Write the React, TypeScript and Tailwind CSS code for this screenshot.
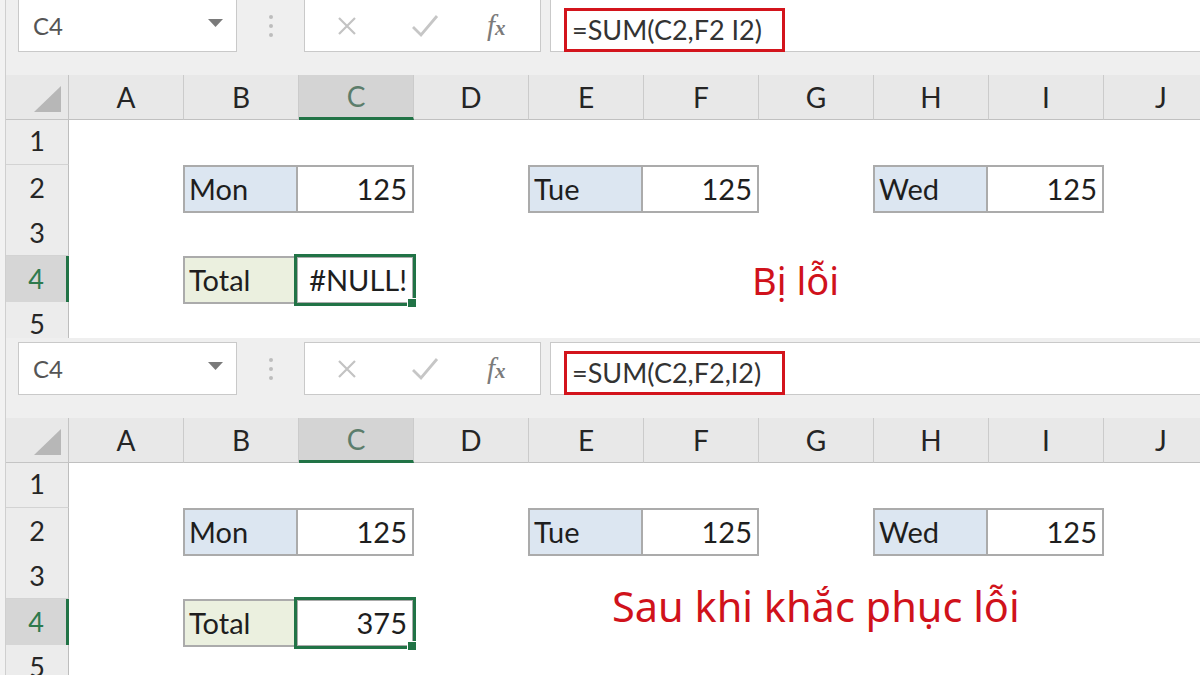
import React from "react";
import clsx from "clsx";

const COLS = ["A", "B", "C", "D", "E", "F", "G", "H", "I", "J"];
const ROW_H = ["h-[46px]", "h-[46px]", "h-[45px]", "h-[46px]", "h-[46px]"];
const GRID = "grid grid-cols-[63px_repeat(10,115px)]";

const FormulaBar = ({ formula }: { formula: string }) => (
  <div className="h-[80px] shrink-0 flex items-start pt-[4px] bg-[#efefef]">
    {/* name box */}
    <div className="ml-[12px] w-[219px] h-[53px] bg-white border border-[#c9c9c9] flex items-center justify-between pl-[14px] pr-[13px]">
      <span className="text-[24px] text-[#555]">C4</span>
      <svg width="15" height="8" viewBox="0 0 15 8" className="-mt-[6px]">
        <path d="M0 0 H15 L7.5 8 Z" fill="#7a7a7a" />
      </svg>
    </div>

    <div className="w-[67px] h-[53px] flex flex-col items-center justify-center gap-[5px]">
      <span className="w-[4px] h-[4px] rounded-full bg-[#bdbdbd]" />
      <span className="w-[4px] h-[4px] rounded-full bg-[#bdbdbd]" />
      <span className="w-[4px] h-[4px] rounded-full bg-[#bdbdbd]" />
    </div>

    {/* cancel / enter / fx */}
    <div className="w-[237px] h-[53px] bg-white border border-[#c9c9c9] flex items-center">
      <svg width="20" height="20" viewBox="0 0 20 20" className="ml-[32px]">
        <path d="M2 2 L18 18 M18 2 L2 18" stroke="#c3c3c3" strokeWidth="2.2" />
      </svg>
      <svg width="28" height="24" viewBox="0 0 28 24" className="ml-[54px]">
        <path d="M2 13 L10 21 L26 2" stroke="#c6c6c6" strokeWidth="2.8" fill="none" />
      </svg>
      <span className="ml-[48px] font-['Liberation_Serif',serif] italic text-[29px] text-[#7b7b7b] leading-none">
        f<span className="text-[21px] font-bold">x</span>
      </span>
    </div>

    {/* formula input */}
    <div className="relative ml-[9px] mr-[2px] flex-1 h-[53px] bg-white border border-[#c9c9c9]">
      <div className="absolute top-[8px] left-[13px] w-[221px] h-[44px] border-[3px] border-[#d3141c] flex items-center pl-[5px]">
        <span className="text-[27px] text-[#333] whitespace-pre">{formula}</span>
      </div>
    </div>
  </div>
);

const HeaderRow = () => (
  <div className={clsx(GRID, "h-[44px] shrink-0 bg-[#e8e8e8]")}>
    <div className="border-r border-b border-[#c4c4c4] relative">
      <svg width="27" height="26" viewBox="0 0 27 26" className="absolute left-[28px] top-[11px]">
        <path d="M27 0 V26 H0 Z" fill="#b7b7b7" />
      </svg>
    </div>
    {COLS.map((c) => (
      <div
        key={c}
        className={clsx(
          "flex items-center justify-center text-[28px] border-r border-[#cbcbcb]",
          c === "C"
            ? "bg-[#d4d4d4] text-[#5c7d6b] border-b-[3px] border-b-[#217346]"
            : "text-[#252525] border-b border-b-[#c0c0c0]"
        )}
      >
        {c}
      </div>
    ))}
  </div>
);

const Pair = ({
  label,
  value,
  labelBg,
  selected,
}: {
  label: string;
  value: string;
  labelBg: string;
  selected?: boolean;
}) => (
  <div className="col-span-2 flex border-2 border-[#ababab] -ml-[1px] text-[29px] text-[#1e1e1e]">
    <div className={clsx("w-[113px] border-r-2 border-[#ababab] flex items-center pl-[4px]", labelBg)}>
      {label}
    </div>
    <div className="relative flex-1 bg-white flex items-center justify-end pr-[5px]">
      <span>{value}</span>
      {selected && (
        <div className="absolute -inset-[4px] border-[3px] border-[#217346]">
          <div className="absolute -right-[4px] -bottom-[5px] w-[10px] h-[10px] bg-[#217346] border border-white" />
        </div>
      )}
    </div>
  </div>
);

const Sheet = ({
  formula,
  result,
  caption,
  captionClass,
  className,
}: {
  formula: string;
  result: string;
  caption: string;
  captionClass: string;
  className?: string;
}) => (
  <div className={clsx("relative flex h-[343px] shrink-0 overflow-hidden", className)}>
    <div className="w-[5px] shrink-0 bg-[#f2f2f2]" />
    <div className="flex-1 flex flex-col border-l border-[#cfcfcf] bg-white">
      <FormulaBar formula={formula} />
      <HeaderRow />
      {ROW_H.map((h, i) => {
        const n = i + 1;
        const active = n === 4;
        return (
          <div key={n} className={clsx(GRID, h, "shrink-0")}>
            <div
              className={clsx(
                "flex items-center justify-center text-[27px] border-b border-[#d3d3d3]",
                active
                  ? "bg-[#d6d6d6] text-[#2e7a4d] border-r-[3px] border-r-[#217346]"
                  : "bg-[#ececec] text-[#262626] border-r border-r-[#bdbdbd]"
              )}
            >
              {n}
            </div>
            {n === 2 && (
              <>
                <div />
                <Pair label="Mon" value="125" labelBg="bg-[#dce6f1]" />
                <div />
                <Pair label="Tue" value="125" labelBg="bg-[#dce6f1]" />
                <div />
                <Pair label="Wed" value="125" labelBg="bg-[#dce6f1]" />
              </>
            )}
            {n === 4 && (
              <>
                <div />
                <Pair label="Total" value={result} labelBg="bg-[#ebf0df]" selected />
              </>
            )}
          </div>
        );
      })}
    </div>
    <span
      className={clsx(
        "absolute font-['Noto_Sans',sans-serif] text-[#d0121b] leading-none whitespace-nowrap",
        captionClass
      )}
    >
      {caption}
    </span>
  </div>
);

export default function App() {
  return (
    <div className="w-[1200px] h-[675px] overflow-hidden bg-white flex flex-col font-['Lato','Liberation_Sans',sans-serif]">
      <Sheet
        className="-mt-[5px]"
        formula="=SUM(C2,F2 I2)"
        result="#NULL!"
        caption="Bị lỗi"
        captionClass="left-[752px] top-[266px] text-[38px]"
      />
      <Sheet
        formula="=SUM(C2,F2,I2)"
        result="375"
        caption="Sau khi khắc phục lỗi"
        captionClass="left-[612px] top-[248px] text-[41.5px]"
      />
    </div>
  );
}
